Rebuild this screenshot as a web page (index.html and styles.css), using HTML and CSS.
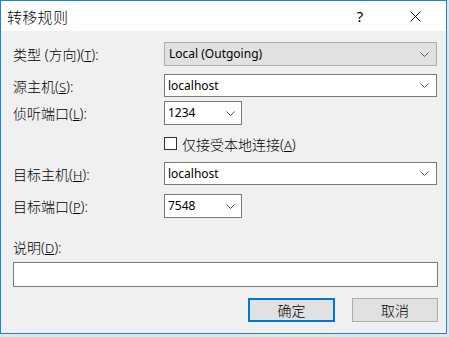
FILE: index.html
```html
<!DOCTYPE html>
<html lang="zh">
<head>
    <meta charset="UTF-8">
    <meta name="viewport" content="width=device-width, initial-scale=1.0">
    <title>转移规则</title>
    <link rel="stylesheet" href="styles.css">
</head>
<body>
    <div class="dialog">
        <div class="titlebar">
            <span class="title">转移规则</span>
            <span class="help">?</span>
            <span class="close">
                <svg width="11" height="11" viewBox="0 0 11 11"><path d="M0.5 0.5 L10.5 10.5 M10.5 0.5 L0.5 10.5" stroke="#111" stroke-width="1" fill="none"/></svg>
            </span>
        </div>

        <div class="content">
            <div class="row row-type">
                <label class="label">类型 (方向)(<u>T</u>):</label>
                <div class="combo combo-wide combo-disabled">
                    <span class="combo-text">Local (Outgoing)</span>
                    <svg class="chevron" width="9" height="5" viewBox="0 0 9 5"><path d="M0.5 0.5 L4.5 4.5 L8.5 0.5" fill="none" stroke="#555" stroke-width="1"/></svg>
                </div>
            </div>

            <div class="row row-src">
                <label class="label">源主机(<u>S</u>):</label>
                <div class="combo combo-wide">
                    <span class="combo-text">localhost</span>
                    <svg class="chevron" width="9" height="5" viewBox="0 0 9 5"><path d="M0.5 0.5 L4.5 4.5 L8.5 0.5" fill="none" stroke="#555" stroke-width="1"/></svg>
                </div>
            </div>

            <div class="row row-port">
                <label class="label">侦听端口(<u>L</u>):</label>
                <div class="combo combo-small">
                    <span class="combo-text">1234</span>
                    <svg class="chevron" width="9" height="5" viewBox="0 0 9 5"><path d="M0.5 0.5 L4.5 4.5 L8.5 0.5" fill="none" stroke="#555" stroke-width="1"/></svg>
                </div>
            </div>

            <div class="row row-check">
                <span class="label"></span>
                <span class="checkbox"></span>
                <span class="check-text">仅接受本地连接(<u>A</u>)</span>
            </div>

            <div class="row row-dst">
                <label class="label">目标主机(<u>H</u>):</label>
                <div class="combo combo-wide">
                    <span class="combo-text">localhost</span>
                    <svg class="chevron" width="9" height="5" viewBox="0 0 9 5"><path d="M0.5 0.5 L4.5 4.5 L8.5 0.5" fill="none" stroke="#555" stroke-width="1"/></svg>
                </div>
            </div>

            <div class="row row-dport">
                <label class="label">目标端口(<u>P</u>):</label>
                <div class="combo combo-small">
                    <span class="combo-text">7548</span>
                    <svg class="chevron" width="9" height="5" viewBox="0 0 9 5"><path d="M0.5 0.5 L4.5 4.5 L8.5 0.5" fill="none" stroke="#555" stroke-width="1"/></svg>
                </div>
            </div>

            <div class="desc-label">说明(<u>D</u>):</div>
            <div class="desc-field"></div>

            <div class="buttons">
                <button class="btn btn-default">确定</button>
                <button class="btn">取消</button>
            </div>
        </div>
    </div>
</body>
</html>
```

FILE: styles.css
```css
* {
    box-sizing: border-box;
}

body {
    margin: 0;
    background-color: #e6e6e6;
    font-family: "Noto Sans", "Noto Sans CJK SC", sans-serif;
    color: #000;
}

/* Dialog window */
.dialog {
    width: 447px;
    height: 334px;
    border: 1px solid #1a84d8;
    background-color: #f0f0f0;
}

.titlebar {
    height: 30px;
    background-color: #fff;
    display: flex;
    align-items: center;
    padding-left: 6px;
    padding-right: 16px;
}
.title {
    flex: 1;
    font-family: "Noto Sans CJK SC", sans-serif;
    font-size: 15px;
    font-weight: 300;
    letter-spacing: 0.3px;
    padding-top: 1px;
}
.help {
    width: 30px;
    margin-left: 2px;
    text-align: center;
    font-size: 15px;
}
.close {
    width: 30px;
    margin-left: 25px;
    display: flex;
    justify-content: center;
    align-items: center;
}

/* Form */
.content {
    padding: 11px 9px 0 12px;
}
.row {
    display: flex;
    align-items: center;
}
.label {
    width: 151px;
    flex-shrink: 0;
    font-size: 14px;
    font-weight: 300;
}
u {
    font-family: "Noto Sans", sans-serif;
    font-size: 13px;
}

.row-type { height: 24px; }
.row-src { height: 23px; margin-top: 8px; }
.row-port { height: 24px; margin-top: 4px; }
.row-check { height: 13px; margin-top: 12px; }
.row-dst { height: 23px; margin-top: 12px; }
.row-dport { height: 24px; margin-top: 9px; }

.combo {
    height: 100%;
    display: flex;
    align-items: center;
    justify-content: space-between;
    padding: 0 7px 0 3px;
    background-color: #fff;
    border: 1px solid #7a7a7a;
    font-size: 12px;
}
.combo-wide { width: 273px; }
.combo-small { width: 78px; padding-right: 6px; }
.combo-disabled {
    background-color: #e1e1e1;
    border-color: #adadad;
    padding-left: 4px;
}
.combo-text {
    padding-bottom: 1px;
}

.checkbox {
    width: 13px;
    height: 13px;
    border: 1px solid #333;
    background-color: #fff;
}
.check-text {
    margin-left: 5px;
    font-size: 14px;
    font-weight: 300;
}

.desc-label {
    margin-top: 22px;
    height: 16px;
    line-height: 16px;
    font-size: 14px;
    font-weight: 300;
}
.desc-field {
    margin-top: 6px;
    width: 425px;
    height: 25px;
    background-color: #fff;
    border: 1px solid #7a7a7a;
}

.buttons {
    margin-top: 11px;
    width: 425px;
    display: flex;
    justify-content: flex-end;
    gap: 17px;
}
.btn {
    width: 86px;
    height: 24px;
    padding: 0;
    background-color: #e1e1e1;
    border: 1px solid #adadad;
    font-family: "Noto Sans CJK SC", sans-serif;
    font-size: 14px;
    font-weight: 300;
    color: #000;
}
.btn-default {
    width: 87px;
    border: 2px solid #0078d7;
}
```
